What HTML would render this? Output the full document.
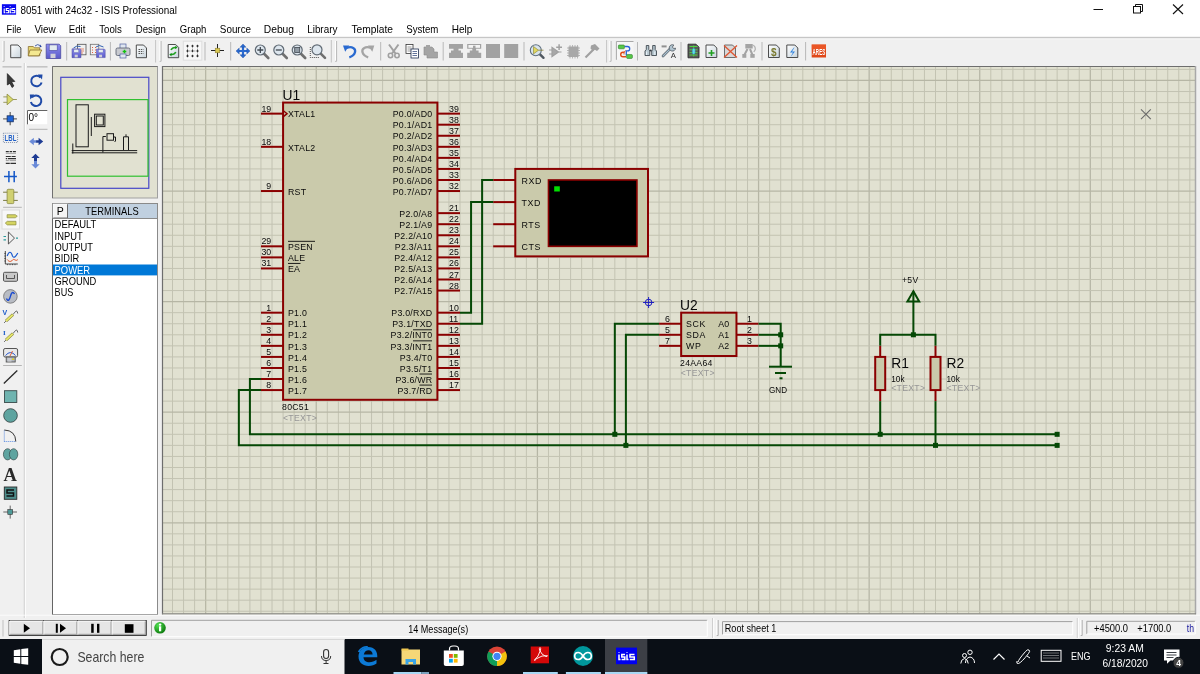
<!DOCTYPE html><html><head><meta charset="utf-8"><style>
html,body{margin:0;padding:0;width:1200px;height:674px;overflow:hidden;background:#f0f0f0;}
svg{position:absolute;left:0;top:0;will-change:transform;}
text{font-family:"Liberation Sans",sans-serif;}
</style></head><body>
<svg width="1200" height="674" viewBox="0 0 1200 674">
<rect x="0" y="0" width="1200" height="38" fill="#ffffff" stroke="none" stroke-width="1" />
<rect x="0" y="36.8" width="1200" height="1.8" fill="#c6c6c6" stroke="none" stroke-width="1" />
<rect x="0" y="38.5" width="1200" height="600.5" fill="#f0f0f0" stroke="none" stroke-width="1" />
<g>
<rect x="1.9" y="4.2" width="14.2" height="10.5" fill="#0808f0" stroke="none" stroke-width="1" />
<path d="M4.2 8.5v4.3h1.2 M8.8 8.5h-2.5v2h2.3v2.2h-2.5 M10.2 8.5v4.3h1.2 M15 8.5h-3v2h2.8v2.2h-3" stroke="#fff" stroke-width="1.1" fill="none"/><path d="M4.2 6.2v0.8M10.2 6.2v0.8" stroke="#fff" stroke-width="1"/>
</g>
<text x="20.4" y="13.9" font-size="11.2" fill="#000" text-anchor="start" textLength="156.5" lengthAdjust="spacingAndGlyphs" >8051 with 24c32 - ISIS Professional</text>
<line x1="1093.5" y1="9.5" x2="1103" y2="9.5" stroke="#111" stroke-width="1" />
<rect x="1133.5" y="6.5" width="7" height="6.5" fill="none" stroke="#111" stroke-width="1" />
<path d="M1135.5 6.5v-2h7v7h-2" fill="none" stroke="#111" stroke-width="1"/>
<line x1="1173" y1="4.5" x2="1183" y2="14" stroke="#111" stroke-width="1.1" />
<line x1="1183" y1="4.5" x2="1173" y2="14" stroke="#111" stroke-width="1.1" />
<text x="6.6" y="32.5" font-size="11.2" fill="#000" text-anchor="start" textLength="14.8" lengthAdjust="spacingAndGlyphs" >File</text>
<text x="34.4" y="32.5" font-size="11.2" fill="#000" text-anchor="start" textLength="21.4" lengthAdjust="spacingAndGlyphs" >View</text>
<text x="68.8" y="32.5" font-size="11.2" fill="#000" text-anchor="start" textLength="16.6" lengthAdjust="spacingAndGlyphs" >Edit</text>
<text x="99.2" y="32.5" font-size="11.2" fill="#000" text-anchor="start" textLength="22.6" lengthAdjust="spacingAndGlyphs" >Tools</text>
<text x="135.8" y="32.5" font-size="11.2" fill="#000" text-anchor="start" textLength="30.0" lengthAdjust="spacingAndGlyphs" >Design</text>
<text x="179.8" y="32.5" font-size="11.2" fill="#000" text-anchor="start" textLength="26.6" lengthAdjust="spacingAndGlyphs" >Graph</text>
<text x="219.8" y="32.5" font-size="11.2" fill="#000" text-anchor="start" textLength="31.3" lengthAdjust="spacingAndGlyphs" >Source</text>
<text x="263.8" y="32.5" font-size="11.2" fill="#000" text-anchor="start" textLength="30.2" lengthAdjust="spacingAndGlyphs" >Debug</text>
<text x="307.2" y="32.5" font-size="11.2" fill="#000" text-anchor="start" textLength="30.2" lengthAdjust="spacingAndGlyphs" >Library</text>
<text x="351.5" y="32.5" font-size="11.2" fill="#000" text-anchor="start" textLength="41.5" lengthAdjust="spacingAndGlyphs" >Template</text>
<text x="406.2" y="32.5" font-size="11.2" fill="#000" text-anchor="start" textLength="32.2" lengthAdjust="spacingAndGlyphs" >System</text>
<text x="451.7" y="32.5" font-size="11.2" fill="#000" text-anchor="start" textLength="20.7" lengthAdjust="spacingAndGlyphs" >Help</text>
<rect x="162" y="66" width="1034" height="548.5" fill="#e1e1d1" stroke="none" stroke-width="1" />
<g>
<line x1="172.5" y1="67" x2="172.5" y2="613.5" stroke="#c3c3b2" stroke-width="1" />
<line x1="183.56" y1="67" x2="183.56" y2="613.5" stroke="#c3c3b2" stroke-width="1" />
<line x1="194.62" y1="67" x2="194.62" y2="613.5" stroke="#c3c3b2" stroke-width="1" />
<line x1="205.67" y1="67" x2="205.67" y2="613.5" stroke="#b6b6a5" stroke-width="1.25" />
<line x1="216.73" y1="67" x2="216.73" y2="613.5" stroke="#c3c3b2" stroke-width="1" />
<line x1="227.79" y1="67" x2="227.79" y2="613.5" stroke="#c3c3b2" stroke-width="1" />
<line x1="238.85" y1="67" x2="238.85" y2="613.5" stroke="#c3c3b2" stroke-width="1" />
<line x1="249.91" y1="67" x2="249.91" y2="613.5" stroke="#c3c3b2" stroke-width="1" />
<line x1="260.96" y1="67" x2="260.96" y2="613.5" stroke="#c3c3b2" stroke-width="1" />
<line x1="272.02" y1="67" x2="272.02" y2="613.5" stroke="#c3c3b2" stroke-width="1" />
<line x1="283.08" y1="67" x2="283.08" y2="613.5" stroke="#c3c3b2" stroke-width="1" />
<line x1="294.14" y1="67" x2="294.14" y2="613.5" stroke="#c3c3b2" stroke-width="1" />
<line x1="305.2" y1="67" x2="305.2" y2="613.5" stroke="#c3c3b2" stroke-width="1" />
<line x1="316.25" y1="67" x2="316.25" y2="613.5" stroke="#b6b6a5" stroke-width="1.25" />
<line x1="327.31" y1="67" x2="327.31" y2="613.5" stroke="#c3c3b2" stroke-width="1" />
<line x1="338.37" y1="67" x2="338.37" y2="613.5" stroke="#c3c3b2" stroke-width="1" />
<line x1="349.43" y1="67" x2="349.43" y2="613.5" stroke="#c3c3b2" stroke-width="1" />
<line x1="360.49" y1="67" x2="360.49" y2="613.5" stroke="#c3c3b2" stroke-width="1" />
<line x1="371.54" y1="67" x2="371.54" y2="613.5" stroke="#c3c3b2" stroke-width="1" />
<line x1="382.6" y1="67" x2="382.6" y2="613.5" stroke="#c3c3b2" stroke-width="1" />
<line x1="393.66" y1="67" x2="393.66" y2="613.5" stroke="#c3c3b2" stroke-width="1" />
<line x1="404.72" y1="67" x2="404.72" y2="613.5" stroke="#c3c3b2" stroke-width="1" />
<line x1="415.78" y1="67" x2="415.78" y2="613.5" stroke="#c3c3b2" stroke-width="1" />
<line x1="426.83" y1="67" x2="426.83" y2="613.5" stroke="#b6b6a5" stroke-width="1.25" />
<line x1="437.89" y1="67" x2="437.89" y2="613.5" stroke="#c3c3b2" stroke-width="1" />
<line x1="448.95" y1="67" x2="448.95" y2="613.5" stroke="#c3c3b2" stroke-width="1" />
<line x1="460.01" y1="67" x2="460.01" y2="613.5" stroke="#c3c3b2" stroke-width="1" />
<line x1="471.07" y1="67" x2="471.07" y2="613.5" stroke="#c3c3b2" stroke-width="1" />
<line x1="482.12" y1="67" x2="482.12" y2="613.5" stroke="#c3c3b2" stroke-width="1" />
<line x1="493.18" y1="67" x2="493.18" y2="613.5" stroke="#c3c3b2" stroke-width="1" />
<line x1="504.24" y1="67" x2="504.24" y2="613.5" stroke="#c3c3b2" stroke-width="1" />
<line x1="515.3" y1="67" x2="515.3" y2="613.5" stroke="#c3c3b2" stroke-width="1" />
<line x1="526.36" y1="67" x2="526.36" y2="613.5" stroke="#c3c3b2" stroke-width="1" />
<line x1="537.41" y1="67" x2="537.41" y2="613.5" stroke="#b6b6a5" stroke-width="1.25" />
<line x1="548.47" y1="67" x2="548.47" y2="613.5" stroke="#c3c3b2" stroke-width="1" />
<line x1="559.53" y1="67" x2="559.53" y2="613.5" stroke="#c3c3b2" stroke-width="1" />
<line x1="570.59" y1="67" x2="570.59" y2="613.5" stroke="#c3c3b2" stroke-width="1" />
<line x1="581.65" y1="67" x2="581.65" y2="613.5" stroke="#c3c3b2" stroke-width="1" />
<line x1="592.7" y1="67" x2="592.7" y2="613.5" stroke="#c3c3b2" stroke-width="1" />
<line x1="603.76" y1="67" x2="603.76" y2="613.5" stroke="#c3c3b2" stroke-width="1" />
<line x1="614.82" y1="67" x2="614.82" y2="613.5" stroke="#c3c3b2" stroke-width="1" />
<line x1="625.88" y1="67" x2="625.88" y2="613.5" stroke="#c3c3b2" stroke-width="1" />
<line x1="636.94" y1="67" x2="636.94" y2="613.5" stroke="#c3c3b2" stroke-width="1" />
<line x1="647.99" y1="67" x2="647.99" y2="613.5" stroke="#b6b6a5" stroke-width="1.25" />
<line x1="659.05" y1="67" x2="659.05" y2="613.5" stroke="#c3c3b2" stroke-width="1" />
<line x1="670.11" y1="67" x2="670.11" y2="613.5" stroke="#c3c3b2" stroke-width="1" />
<line x1="681.17" y1="67" x2="681.17" y2="613.5" stroke="#c3c3b2" stroke-width="1" />
<line x1="692.23" y1="67" x2="692.23" y2="613.5" stroke="#c3c3b2" stroke-width="1" />
<line x1="703.28" y1="67" x2="703.28" y2="613.5" stroke="#c3c3b2" stroke-width="1" />
<line x1="714.34" y1="67" x2="714.34" y2="613.5" stroke="#c3c3b2" stroke-width="1" />
<line x1="725.4" y1="67" x2="725.4" y2="613.5" stroke="#c3c3b2" stroke-width="1" />
<line x1="736.46" y1="67" x2="736.46" y2="613.5" stroke="#c3c3b2" stroke-width="1" />
<line x1="747.52" y1="67" x2="747.52" y2="613.5" stroke="#c3c3b2" stroke-width="1" />
<line x1="758.57" y1="67" x2="758.57" y2="613.5" stroke="#b6b6a5" stroke-width="1.25" />
<line x1="769.63" y1="67" x2="769.63" y2="613.5" stroke="#c3c3b2" stroke-width="1" />
<line x1="780.69" y1="67" x2="780.69" y2="613.5" stroke="#c3c3b2" stroke-width="1" />
<line x1="791.75" y1="67" x2="791.75" y2="613.5" stroke="#c3c3b2" stroke-width="1" />
<line x1="802.81" y1="67" x2="802.81" y2="613.5" stroke="#c3c3b2" stroke-width="1" />
<line x1="813.86" y1="67" x2="813.86" y2="613.5" stroke="#c3c3b2" stroke-width="1" />
<line x1="824.92" y1="67" x2="824.92" y2="613.5" stroke="#c3c3b2" stroke-width="1" />
<line x1="835.98" y1="67" x2="835.98" y2="613.5" stroke="#c3c3b2" stroke-width="1" />
<line x1="847.04" y1="67" x2="847.04" y2="613.5" stroke="#c3c3b2" stroke-width="1" />
<line x1="858.1" y1="67" x2="858.1" y2="613.5" stroke="#c3c3b2" stroke-width="1" />
<line x1="869.15" y1="67" x2="869.15" y2="613.5" stroke="#b6b6a5" stroke-width="1.25" />
<line x1="880.21" y1="67" x2="880.21" y2="613.5" stroke="#c3c3b2" stroke-width="1" />
<line x1="891.27" y1="67" x2="891.27" y2="613.5" stroke="#c3c3b2" stroke-width="1" />
<line x1="902.33" y1="67" x2="902.33" y2="613.5" stroke="#c3c3b2" stroke-width="1" />
<line x1="913.39" y1="67" x2="913.39" y2="613.5" stroke="#c3c3b2" stroke-width="1" />
<line x1="924.44" y1="67" x2="924.44" y2="613.5" stroke="#c3c3b2" stroke-width="1" />
<line x1="935.5" y1="67" x2="935.5" y2="613.5" stroke="#c3c3b2" stroke-width="1" />
<line x1="946.56" y1="67" x2="946.56" y2="613.5" stroke="#c3c3b2" stroke-width="1" />
<line x1="957.62" y1="67" x2="957.62" y2="613.5" stroke="#c3c3b2" stroke-width="1" />
<line x1="968.68" y1="67" x2="968.68" y2="613.5" stroke="#c3c3b2" stroke-width="1" />
<line x1="979.73" y1="67" x2="979.73" y2="613.5" stroke="#b6b6a5" stroke-width="1.25" />
<line x1="990.79" y1="67" x2="990.79" y2="613.5" stroke="#c3c3b2" stroke-width="1" />
<line x1="1001.85" y1="67" x2="1001.85" y2="613.5" stroke="#c3c3b2" stroke-width="1" />
<line x1="1012.91" y1="67" x2="1012.91" y2="613.5" stroke="#c3c3b2" stroke-width="1" />
<line x1="1023.97" y1="67" x2="1023.97" y2="613.5" stroke="#c3c3b2" stroke-width="1" />
<line x1="1035.02" y1="67" x2="1035.02" y2="613.5" stroke="#c3c3b2" stroke-width="1" />
<line x1="1046.08" y1="67" x2="1046.08" y2="613.5" stroke="#c3c3b2" stroke-width="1" />
<line x1="1057.14" y1="67" x2="1057.14" y2="613.5" stroke="#c3c3b2" stroke-width="1" />
<line x1="1068.2" y1="67" x2="1068.2" y2="613.5" stroke="#c3c3b2" stroke-width="1" />
<line x1="1079.26" y1="67" x2="1079.26" y2="613.5" stroke="#c3c3b2" stroke-width="1" />
<line x1="1090.31" y1="67" x2="1090.31" y2="613.5" stroke="#b6b6a5" stroke-width="1.25" />
<line x1="1101.37" y1="67" x2="1101.37" y2="613.5" stroke="#c3c3b2" stroke-width="1" />
<line x1="1112.43" y1="67" x2="1112.43" y2="613.5" stroke="#c3c3b2" stroke-width="1" />
<line x1="1123.49" y1="67" x2="1123.49" y2="613.5" stroke="#c3c3b2" stroke-width="1" />
<line x1="1134.55" y1="67" x2="1134.55" y2="613.5" stroke="#c3c3b2" stroke-width="1" />
<line x1="1145.6" y1="67" x2="1145.6" y2="613.5" stroke="#c3c3b2" stroke-width="1" />
<line x1="1156.66" y1="67" x2="1156.66" y2="613.5" stroke="#c3c3b2" stroke-width="1" />
<line x1="1167.72" y1="67" x2="1167.72" y2="613.5" stroke="#c3c3b2" stroke-width="1" />
<line x1="1178.78" y1="67" x2="1178.78" y2="613.5" stroke="#c3c3b2" stroke-width="1" />
<line x1="1189.84" y1="67" x2="1189.84" y2="613.5" stroke="#c3c3b2" stroke-width="1" />
<line x1="163" y1="69.4" x2="1195" y2="69.4" stroke="#c3c3b2" stroke-width="1" />
<line x1="163" y1="80.46" x2="1195" y2="80.46" stroke="#b6b6a5" stroke-width="1.25" />
<line x1="163" y1="91.52" x2="1195" y2="91.52" stroke="#c3c3b2" stroke-width="1" />
<line x1="163" y1="102.57" x2="1195" y2="102.57" stroke="#c3c3b2" stroke-width="1" />
<line x1="163" y1="113.63" x2="1195" y2="113.63" stroke="#c3c3b2" stroke-width="1" />
<line x1="163" y1="124.69" x2="1195" y2="124.69" stroke="#c3c3b2" stroke-width="1" />
<line x1="163" y1="135.75" x2="1195" y2="135.75" stroke="#c3c3b2" stroke-width="1" />
<line x1="163" y1="146.81" x2="1195" y2="146.81" stroke="#c3c3b2" stroke-width="1" />
<line x1="163" y1="157.86" x2="1195" y2="157.86" stroke="#c3c3b2" stroke-width="1" />
<line x1="163" y1="168.92" x2="1195" y2="168.92" stroke="#c3c3b2" stroke-width="1" />
<line x1="163" y1="179.98" x2="1195" y2="179.98" stroke="#c3c3b2" stroke-width="1" />
<line x1="163" y1="191.04" x2="1195" y2="191.04" stroke="#b6b6a5" stroke-width="1.25" />
<line x1="163" y1="202.1" x2="1195" y2="202.1" stroke="#c3c3b2" stroke-width="1" />
<line x1="163" y1="213.15" x2="1195" y2="213.15" stroke="#c3c3b2" stroke-width="1" />
<line x1="163" y1="224.21" x2="1195" y2="224.21" stroke="#c3c3b2" stroke-width="1" />
<line x1="163" y1="235.27" x2="1195" y2="235.27" stroke="#c3c3b2" stroke-width="1" />
<line x1="163" y1="246.33" x2="1195" y2="246.33" stroke="#c3c3b2" stroke-width="1" />
<line x1="163" y1="257.39" x2="1195" y2="257.39" stroke="#c3c3b2" stroke-width="1" />
<line x1="163" y1="268.44" x2="1195" y2="268.44" stroke="#c3c3b2" stroke-width="1" />
<line x1="163" y1="279.5" x2="1195" y2="279.5" stroke="#c3c3b2" stroke-width="1" />
<line x1="163" y1="290.56" x2="1195" y2="290.56" stroke="#c3c3b2" stroke-width="1" />
<line x1="163" y1="301.62" x2="1195" y2="301.62" stroke="#b6b6a5" stroke-width="1.25" />
<line x1="163" y1="312.68" x2="1195" y2="312.68" stroke="#c3c3b2" stroke-width="1" />
<line x1="163" y1="323.73" x2="1195" y2="323.73" stroke="#c3c3b2" stroke-width="1" />
<line x1="163" y1="334.79" x2="1195" y2="334.79" stroke="#c3c3b2" stroke-width="1" />
<line x1="163" y1="345.85" x2="1195" y2="345.85" stroke="#c3c3b2" stroke-width="1" />
<line x1="163" y1="356.91" x2="1195" y2="356.91" stroke="#c3c3b2" stroke-width="1" />
<line x1="163" y1="367.97" x2="1195" y2="367.97" stroke="#c3c3b2" stroke-width="1" />
<line x1="163" y1="379.02" x2="1195" y2="379.02" stroke="#c3c3b2" stroke-width="1" />
<line x1="163" y1="390.08" x2="1195" y2="390.08" stroke="#c3c3b2" stroke-width="1" />
<line x1="163" y1="401.14" x2="1195" y2="401.14" stroke="#c3c3b2" stroke-width="1" />
<line x1="163" y1="412.2" x2="1195" y2="412.2" stroke="#b6b6a5" stroke-width="1.25" />
<line x1="163" y1="423.26" x2="1195" y2="423.26" stroke="#c3c3b2" stroke-width="1" />
<line x1="163" y1="434.31" x2="1195" y2="434.31" stroke="#c3c3b2" stroke-width="1" />
<line x1="163" y1="445.37" x2="1195" y2="445.37" stroke="#c3c3b2" stroke-width="1" />
<line x1="163" y1="456.43" x2="1195" y2="456.43" stroke="#c3c3b2" stroke-width="1" />
<line x1="163" y1="467.49" x2="1195" y2="467.49" stroke="#c3c3b2" stroke-width="1" />
<line x1="163" y1="478.55" x2="1195" y2="478.55" stroke="#c3c3b2" stroke-width="1" />
<line x1="163" y1="489.6" x2="1195" y2="489.6" stroke="#c3c3b2" stroke-width="1" />
<line x1="163" y1="500.66" x2="1195" y2="500.66" stroke="#c3c3b2" stroke-width="1" />
<line x1="163" y1="511.72" x2="1195" y2="511.72" stroke="#c3c3b2" stroke-width="1" />
<line x1="163" y1="522.78" x2="1195" y2="522.78" stroke="#b6b6a5" stroke-width="1.25" />
<line x1="163" y1="533.84" x2="1195" y2="533.84" stroke="#c3c3b2" stroke-width="1" />
<line x1="163" y1="544.89" x2="1195" y2="544.89" stroke="#c3c3b2" stroke-width="1" />
<line x1="163" y1="555.95" x2="1195" y2="555.95" stroke="#c3c3b2" stroke-width="1" />
<line x1="163" y1="567.01" x2="1195" y2="567.01" stroke="#c3c3b2" stroke-width="1" />
<line x1="163" y1="578.07" x2="1195" y2="578.07" stroke="#c3c3b2" stroke-width="1" />
<line x1="163" y1="589.13" x2="1195" y2="589.13" stroke="#c3c3b2" stroke-width="1" />
<line x1="163" y1="600.18" x2="1195" y2="600.18" stroke="#c3c3b2" stroke-width="1" />
<line x1="163" y1="611.24" x2="1195" y2="611.24" stroke="#c3c3b2" stroke-width="1" />
</g>
<line x1="162" y1="66.5" x2="1196" y2="66.5" stroke="#6e6e6e" stroke-width="1.2" />
<line x1="162.5" y1="66" x2="162.5" y2="614.5" stroke="#6e6e6e" stroke-width="1.2" />
<line x1="1195.5" y1="66" x2="1195.5" y2="614.5" stroke="#a8a8a8" stroke-width="1.5" />
<line x1="162" y1="613.9" x2="1196" y2="613.9" stroke="#858580" stroke-width="1.3" />
<g font-family="Liberation Sans, sans-serif">
<rect x="283.08" y="102.57" width="154.32" height="297.23" fill="#cacaab" stroke="#8a0000" stroke-width="2" />
<text x="282.6" y="99.7" font-size="13.8" fill="#0a0a0a" text-anchor="start" >U1</text>
<line x1="260.96" y1="113.63" x2="283.08" y2="113.63" stroke="#8a0000" stroke-width="2" />
<text x="288" y="117.33" font-size="8.8" fill="#0a0a0a" text-anchor="start" letter-spacing="0.25" >XTAL1</text>
<text x="271.2" y="111.63" font-size="8.8" fill="#0a0a0a" text-anchor="end" >19</text>
<line x1="260.96" y1="146.81" x2="283.08" y2="146.81" stroke="#8a0000" stroke-width="2" />
<text x="288" y="150.51" font-size="8.8" fill="#0a0a0a" text-anchor="start" letter-spacing="0.25" >XTAL2</text>
<text x="271.2" y="144.81" font-size="8.8" fill="#0a0a0a" text-anchor="end" >18</text>
<line x1="260.96" y1="191.04" x2="283.08" y2="191.04" stroke="#8a0000" stroke-width="2" />
<text x="288" y="194.74" font-size="8.8" fill="#0a0a0a" text-anchor="start" letter-spacing="0.25" >RST</text>
<text x="271.2" y="189.04" font-size="8.8" fill="#0a0a0a" text-anchor="end" >9</text>
<line x1="260.96" y1="246.33" x2="283.08" y2="246.33" stroke="#8a0000" stroke-width="2" />
<text x="288" y="250.03" font-size="8.8" fill="#0a0a0a" text-anchor="start" letter-spacing="0.25" >PSEN</text>
<text x="271.2" y="244.33" font-size="8.8" fill="#0a0a0a" text-anchor="end" >29</text>
<line x1="260.96" y1="257.39" x2="283.08" y2="257.39" stroke="#8a0000" stroke-width="2" />
<text x="288" y="261.09" font-size="8.8" fill="#0a0a0a" text-anchor="start" letter-spacing="0.25" >ALE</text>
<text x="271.2" y="255.39" font-size="8.8" fill="#0a0a0a" text-anchor="end" >30</text>
<line x1="260.96" y1="268.44" x2="283.08" y2="268.44" stroke="#8a0000" stroke-width="2" />
<text x="288" y="272.14" font-size="8.8" fill="#0a0a0a" text-anchor="start" letter-spacing="0.25" >EA</text>
<text x="271.2" y="266.44" font-size="8.8" fill="#0a0a0a" text-anchor="end" >31</text>
<line x1="260.96" y1="312.68" x2="283.08" y2="312.68" stroke="#8a0000" stroke-width="2" />
<text x="288" y="316.38" font-size="8.8" fill="#0a0a0a" text-anchor="start" letter-spacing="0.25" >P1.0</text>
<text x="271.2" y="310.68" font-size="8.8" fill="#0a0a0a" text-anchor="end" >1</text>
<line x1="260.96" y1="323.73" x2="283.08" y2="323.73" stroke="#8a0000" stroke-width="2" />
<text x="288" y="327.43" font-size="8.8" fill="#0a0a0a" text-anchor="start" letter-spacing="0.25" >P1.1</text>
<text x="271.2" y="321.73" font-size="8.8" fill="#0a0a0a" text-anchor="end" >2</text>
<line x1="260.96" y1="334.79" x2="283.08" y2="334.79" stroke="#8a0000" stroke-width="2" />
<text x="288" y="338.49" font-size="8.8" fill="#0a0a0a" text-anchor="start" letter-spacing="0.25" >P1.2</text>
<text x="271.2" y="332.79" font-size="8.8" fill="#0a0a0a" text-anchor="end" >3</text>
<line x1="260.96" y1="345.85" x2="283.08" y2="345.85" stroke="#8a0000" stroke-width="2" />
<text x="288" y="349.55" font-size="8.8" fill="#0a0a0a" text-anchor="start" letter-spacing="0.25" >P1.3</text>
<text x="271.2" y="343.85" font-size="8.8" fill="#0a0a0a" text-anchor="end" >4</text>
<line x1="260.96" y1="356.91" x2="283.08" y2="356.91" stroke="#8a0000" stroke-width="2" />
<text x="288" y="360.61" font-size="8.8" fill="#0a0a0a" text-anchor="start" letter-spacing="0.25" >P1.4</text>
<text x="271.2" y="354.91" font-size="8.8" fill="#0a0a0a" text-anchor="end" >5</text>
<line x1="260.96" y1="367.97" x2="283.08" y2="367.97" stroke="#8a0000" stroke-width="2" />
<text x="288" y="371.67" font-size="8.8" fill="#0a0a0a" text-anchor="start" letter-spacing="0.25" >P1.5</text>
<text x="271.2" y="365.97" font-size="8.8" fill="#0a0a0a" text-anchor="end" >6</text>
<line x1="260.96" y1="379.02" x2="283.08" y2="379.02" stroke="#8a0000" stroke-width="2" />
<text x="288" y="382.72" font-size="8.8" fill="#0a0a0a" text-anchor="start" letter-spacing="0.25" >P1.6</text>
<text x="271.2" y="377.02" font-size="8.8" fill="#0a0a0a" text-anchor="end" >7</text>
<line x1="260.96" y1="390.08" x2="283.08" y2="390.08" stroke="#8a0000" stroke-width="2" />
<text x="288" y="393.78" font-size="8.8" fill="#0a0a0a" text-anchor="start" letter-spacing="0.25" >P1.7</text>
<text x="271.2" y="388.08" font-size="8.8" fill="#0a0a0a" text-anchor="end" >8</text>
<line x1="288" y1="241.33" x2="315" y2="241.33" stroke="#0a0a0a" stroke-width="0.9" />
<line x1="288" y1="263.44" x2="300.5" y2="263.44" stroke="#0a0a0a" stroke-width="0.9" />
<polyline fill="none" stroke="#8a0000" stroke-width="1.4" stroke-linejoin="miter" points="283.08,110.43 287.08,113.63 283.08,116.83"/>
<line x1="437.4" y1="113.63" x2="460.01" y2="113.63" stroke="#8a0000" stroke-width="2" />
<text x="432.4" y="117.33" font-size="8.8" fill="#0a0a0a" text-anchor="end" letter-spacing="0.25" >P0.0/AD0</text>
<text x="449" y="111.63" font-size="8.8" fill="#0a0a0a" text-anchor="start" >39</text>
<line x1="437.4" y1="124.69" x2="460.01" y2="124.69" stroke="#8a0000" stroke-width="2" />
<text x="432.4" y="128.39" font-size="8.8" fill="#0a0a0a" text-anchor="end" letter-spacing="0.25" >P0.1/AD1</text>
<text x="449" y="122.69" font-size="8.8" fill="#0a0a0a" text-anchor="start" >38</text>
<line x1="437.4" y1="135.75" x2="460.01" y2="135.75" stroke="#8a0000" stroke-width="2" />
<text x="432.4" y="139.45" font-size="8.8" fill="#0a0a0a" text-anchor="end" letter-spacing="0.25" >P0.2/AD2</text>
<text x="449" y="133.75" font-size="8.8" fill="#0a0a0a" text-anchor="start" >37</text>
<line x1="437.4" y1="146.81" x2="460.01" y2="146.81" stroke="#8a0000" stroke-width="2" />
<text x="432.4" y="150.51" font-size="8.8" fill="#0a0a0a" text-anchor="end" letter-spacing="0.25" >P0.3/AD3</text>
<text x="449" y="144.81" font-size="8.8" fill="#0a0a0a" text-anchor="start" >36</text>
<line x1="437.4" y1="157.86" x2="460.01" y2="157.86" stroke="#8a0000" stroke-width="2" />
<text x="432.4" y="161.56" font-size="8.8" fill="#0a0a0a" text-anchor="end" letter-spacing="0.25" >P0.4/AD4</text>
<text x="449" y="155.86" font-size="8.8" fill="#0a0a0a" text-anchor="start" >35</text>
<line x1="437.4" y1="168.92" x2="460.01" y2="168.92" stroke="#8a0000" stroke-width="2" />
<text x="432.4" y="172.62" font-size="8.8" fill="#0a0a0a" text-anchor="end" letter-spacing="0.25" >P0.5/AD5</text>
<text x="449" y="166.92" font-size="8.8" fill="#0a0a0a" text-anchor="start" >34</text>
<line x1="437.4" y1="179.98" x2="460.01" y2="179.98" stroke="#8a0000" stroke-width="2" />
<text x="432.4" y="183.68" font-size="8.8" fill="#0a0a0a" text-anchor="end" letter-spacing="0.25" >P0.6/AD6</text>
<text x="449" y="177.98" font-size="8.8" fill="#0a0a0a" text-anchor="start" >33</text>
<line x1="437.4" y1="191.04" x2="460.01" y2="191.04" stroke="#8a0000" stroke-width="2" />
<text x="432.4" y="194.74" font-size="8.8" fill="#0a0a0a" text-anchor="end" letter-spacing="0.25" >P0.7/AD7</text>
<text x="449" y="189.04" font-size="8.8" fill="#0a0a0a" text-anchor="start" >32</text>
<line x1="437.4" y1="213.15" x2="460.01" y2="213.15" stroke="#8a0000" stroke-width="2" />
<text x="432.4" y="216.85" font-size="8.8" fill="#0a0a0a" text-anchor="end" letter-spacing="0.25" >P2.0/A8</text>
<text x="449" y="211.15" font-size="8.8" fill="#0a0a0a" text-anchor="start" >21</text>
<line x1="437.4" y1="224.21" x2="460.01" y2="224.21" stroke="#8a0000" stroke-width="2" />
<text x="432.4" y="227.91" font-size="8.8" fill="#0a0a0a" text-anchor="end" letter-spacing="0.25" >P2.1/A9</text>
<text x="449" y="222.21" font-size="8.8" fill="#0a0a0a" text-anchor="start" >22</text>
<line x1="437.4" y1="235.27" x2="460.01" y2="235.27" stroke="#8a0000" stroke-width="2" />
<text x="432.4" y="238.97" font-size="8.8" fill="#0a0a0a" text-anchor="end" letter-spacing="0.25" >P2.2/A10</text>
<text x="449" y="233.27" font-size="8.8" fill="#0a0a0a" text-anchor="start" >23</text>
<line x1="437.4" y1="246.33" x2="460.01" y2="246.33" stroke="#8a0000" stroke-width="2" />
<text x="432.4" y="250.03" font-size="8.8" fill="#0a0a0a" text-anchor="end" letter-spacing="0.25" >P2.3/A11</text>
<text x="449" y="244.33" font-size="8.8" fill="#0a0a0a" text-anchor="start" >24</text>
<line x1="437.4" y1="257.39" x2="460.01" y2="257.39" stroke="#8a0000" stroke-width="2" />
<text x="432.4" y="261.09" font-size="8.8" fill="#0a0a0a" text-anchor="end" letter-spacing="0.25" >P2.4/A12</text>
<text x="449" y="255.39" font-size="8.8" fill="#0a0a0a" text-anchor="start" >25</text>
<line x1="437.4" y1="268.44" x2="460.01" y2="268.44" stroke="#8a0000" stroke-width="2" />
<text x="432.4" y="272.14" font-size="8.8" fill="#0a0a0a" text-anchor="end" letter-spacing="0.25" >P2.5/A13</text>
<text x="449" y="266.44" font-size="8.8" fill="#0a0a0a" text-anchor="start" >26</text>
<line x1="437.4" y1="279.5" x2="460.01" y2="279.5" stroke="#8a0000" stroke-width="2" />
<text x="432.4" y="283.2" font-size="8.8" fill="#0a0a0a" text-anchor="end" letter-spacing="0.25" >P2.6/A14</text>
<text x="449" y="277.5" font-size="8.8" fill="#0a0a0a" text-anchor="start" >27</text>
<line x1="437.4" y1="290.56" x2="460.01" y2="290.56" stroke="#8a0000" stroke-width="2" />
<text x="432.4" y="294.26" font-size="8.8" fill="#0a0a0a" text-anchor="end" letter-spacing="0.25" >P2.7/A15</text>
<text x="449" y="288.56" font-size="8.8" fill="#0a0a0a" text-anchor="start" >28</text>
<line x1="437.4" y1="312.68" x2="460.01" y2="312.68" stroke="#8a0000" stroke-width="2" />
<text x="432.4" y="316.38" font-size="8.8" fill="#0a0a0a" text-anchor="end" letter-spacing="0.25" >P3.0/RXD</text>
<text x="449" y="310.68" font-size="8.8" fill="#0a0a0a" text-anchor="start" >10</text>
<line x1="437.4" y1="323.73" x2="460.01" y2="323.73" stroke="#8a0000" stroke-width="2" />
<text x="432.4" y="327.43" font-size="8.8" fill="#0a0a0a" text-anchor="end" letter-spacing="0.25" >P3.1/TXD</text>
<text x="449" y="321.73" font-size="8.8" fill="#0a0a0a" text-anchor="start" >11</text>
<line x1="437.4" y1="334.79" x2="460.01" y2="334.79" stroke="#8a0000" stroke-width="2" />
<text x="432.4" y="338.49" font-size="8.8" fill="#0a0a0a" text-anchor="end" letter-spacing="0.25" >P3.2/INT0</text>
<text x="449" y="332.79" font-size="8.8" fill="#0a0a0a" text-anchor="start" >12</text>
<line x1="437.4" y1="345.85" x2="460.01" y2="345.85" stroke="#8a0000" stroke-width="2" />
<text x="432.4" y="349.55" font-size="8.8" fill="#0a0a0a" text-anchor="end" letter-spacing="0.25" >P3.3/INT1</text>
<text x="449" y="343.85" font-size="8.8" fill="#0a0a0a" text-anchor="start" >13</text>
<line x1="437.4" y1="356.91" x2="460.01" y2="356.91" stroke="#8a0000" stroke-width="2" />
<text x="432.4" y="360.61" font-size="8.8" fill="#0a0a0a" text-anchor="end" letter-spacing="0.25" >P3.4/T0</text>
<text x="449" y="354.91" font-size="8.8" fill="#0a0a0a" text-anchor="start" >14</text>
<line x1="437.4" y1="367.97" x2="460.01" y2="367.97" stroke="#8a0000" stroke-width="2" />
<text x="432.4" y="371.67" font-size="8.8" fill="#0a0a0a" text-anchor="end" letter-spacing="0.25" >P3.5/T1</text>
<text x="449" y="365.97" font-size="8.8" fill="#0a0a0a" text-anchor="start" >15</text>
<line x1="437.4" y1="379.02" x2="460.01" y2="379.02" stroke="#8a0000" stroke-width="2" />
<text x="432.4" y="382.72" font-size="8.8" fill="#0a0a0a" text-anchor="end" letter-spacing="0.25" >P3.6/WR</text>
<text x="449" y="377.02" font-size="8.8" fill="#0a0a0a" text-anchor="start" >16</text>
<line x1="437.4" y1="390.08" x2="460.01" y2="390.08" stroke="#8a0000" stroke-width="2" />
<text x="432.4" y="393.78" font-size="8.8" fill="#0a0a0a" text-anchor="end" letter-spacing="0.25" >P3.7/RD</text>
<text x="449" y="388.08" font-size="8.8" fill="#0a0a0a" text-anchor="start" >17</text>
<line x1="413" y1="329.79" x2="432" y2="329.79" stroke="#0a0a0a" stroke-width="0.9" />
<line x1="413" y1="340.85" x2="432" y2="340.85" stroke="#0a0a0a" stroke-width="0.9" />
<line x1="419.5" y1="374.02" x2="432" y2="374.02" stroke="#0a0a0a" stroke-width="0.9" />
<line x1="419.5" y1="385.08" x2="432" y2="385.08" stroke="#0a0a0a" stroke-width="0.9" />
<text x="282" y="409.7" font-size="8.7" fill="#0a0a0a" text-anchor="start" letter-spacing="0.3" >80C51</text>
<text x="283" y="420.7" font-size="8.7" fill="#969696" text-anchor="start" letter-spacing="0.3" >&lt;TEXT&gt;</text>
<rect x="515.3" y="168.92" width="132.7" height="87.46" fill="#cacaab" stroke="#8a0000" stroke-width="2" />
<rect x="548.47" y="179.98" width="88.46" height="66.35" fill="#000" stroke="#8a0000" stroke-width="1.6" />
<rect x="554.2" y="186.3" width="5.6" height="5.2" fill="#00e000" stroke="none" stroke-width="1" />
<line x1="493.18" y1="179.98" x2="515.3" y2="179.98" stroke="#8a0000" stroke-width="2" />
<text x="521.5" y="183.78" font-size="8.9" fill="#0a0a0a" text-anchor="start" letter-spacing="0.6" >RXD</text>
<line x1="493.18" y1="202.1" x2="515.3" y2="202.1" stroke="#8a0000" stroke-width="2" />
<text x="521.5" y="205.9" font-size="8.9" fill="#0a0a0a" text-anchor="start" letter-spacing="0.6" >TXD</text>
<line x1="493.18" y1="224.21" x2="515.3" y2="224.21" stroke="#8a0000" stroke-width="2" />
<text x="521.5" y="228.01" font-size="8.9" fill="#0a0a0a" text-anchor="start" letter-spacing="0.6" >RTS</text>
<line x1="493.18" y1="246.33" x2="515.3" y2="246.33" stroke="#8a0000" stroke-width="2" />
<text x="521.5" y="250.13" font-size="8.9" fill="#0a0a0a" text-anchor="start" letter-spacing="0.6" >CTS</text>
<rect x="681.17" y="312.68" width="55.29" height="43.32" fill="#cacaab" stroke="#8a0000" stroke-width="2" />
<text x="680" y="310" font-size="13.8" fill="#0a0a0a" text-anchor="start" >U2</text>
<line x1="659.05" y1="323.73" x2="681.17" y2="323.73" stroke="#8a0000" stroke-width="2" />
<line x1="736.46" y1="323.73" x2="758.57" y2="323.73" stroke="#8a0000" stroke-width="2" />
<text x="686" y="327.33" font-size="8.8" fill="#0a0a0a" text-anchor="start" letter-spacing="0.6" >SCK</text>
<text x="729.5" y="327.33" font-size="8.8" fill="#0a0a0a" text-anchor="end" letter-spacing="0.3" >A0</text>
<text x="669.8" y="321.73" font-size="8.8" fill="#0a0a0a" text-anchor="end" >6</text>
<text x="747" y="321.73" font-size="8.8" fill="#0a0a0a" text-anchor="start" >1</text>
<line x1="659.05" y1="334.79" x2="681.17" y2="334.79" stroke="#8a0000" stroke-width="2" />
<line x1="736.46" y1="334.79" x2="758.57" y2="334.79" stroke="#8a0000" stroke-width="2" />
<text x="686" y="338.39" font-size="8.8" fill="#0a0a0a" text-anchor="start" letter-spacing="0.6" >SDA</text>
<text x="729.5" y="338.39" font-size="8.8" fill="#0a0a0a" text-anchor="end" letter-spacing="0.3" >A1</text>
<text x="669.8" y="332.79" font-size="8.8" fill="#0a0a0a" text-anchor="end" >5</text>
<text x="747" y="332.79" font-size="8.8" fill="#0a0a0a" text-anchor="start" >2</text>
<line x1="659.05" y1="345.85" x2="681.17" y2="345.85" stroke="#8a0000" stroke-width="2" />
<line x1="736.46" y1="345.85" x2="758.57" y2="345.85" stroke="#8a0000" stroke-width="2" />
<text x="686" y="349.45" font-size="8.8" fill="#0a0a0a" text-anchor="start" letter-spacing="0.6" >WP</text>
<text x="729.5" y="349.45" font-size="8.8" fill="#0a0a0a" text-anchor="end" letter-spacing="0.3" >A2</text>
<text x="669.8" y="343.85" font-size="8.8" fill="#0a0a0a" text-anchor="end" >7</text>
<text x="747" y="343.85" font-size="8.8" fill="#0a0a0a" text-anchor="start" >3</text>
<text x="680" y="366" font-size="8.7" fill="#0a0a0a" text-anchor="start" letter-spacing="0.3" >24AA64</text>
<text x="680.7" y="376" font-size="8.7" fill="#969696" text-anchor="start" letter-spacing="0.3" >&lt;TEXT&gt;</text>
<polyline fill="none" stroke="#054805" stroke-width="2" stroke-linejoin="miter" points="758.57,323.73 780.69,323.73 780.69,366.7"/>
<line x1="758.57" y1="334.79" x2="780.69" y2="334.79" stroke="#054805" stroke-width="2" />
<line x1="758.57" y1="345.85" x2="780.69" y2="345.85" stroke="#054805" stroke-width="2" />
<rect x="778.19" y="332.29" width="5" height="5" fill="#054805" stroke="none" stroke-width="1" />
<rect x="778.19" y="343.35" width="5" height="5" fill="#054805" stroke="none" stroke-width="1" />
<line x1="769" y1="366.7" x2="792" y2="366.7" stroke="#054805" stroke-width="2" />
<line x1="775" y1="373" x2="786" y2="373" stroke="#054805" stroke-width="2" />
<line x1="779.5" y1="378.3" x2="782.5" y2="378.3" stroke="#054805" stroke-width="2" />
<text x="769" y="392.9" font-size="8.6" fill="#0a0a0a" text-anchor="start" textLength="18" lengthAdjust="spacingAndGlyphs" >GND</text>
<polyline fill="none" stroke="#054805" stroke-width="2" stroke-linejoin="miter" points="913.39,291.36 913.39,334.79"/>
<path d="M913.39 291.2 L919.2 301.5 L907.4 301.5 Z" fill="none" stroke="#054805" stroke-width="2"/>
<text x="902" y="283.3" font-size="8.6" fill="#0a0a0a" text-anchor="start" letter-spacing="0.3" >+5V</text>
<polyline fill="none" stroke="#054805" stroke-width="2" stroke-linejoin="miter" points="880.21,345.85 880.21,334.79 935.5,334.79 935.5,345.85"/>
<rect x="910.89" y="332.29" width="5" height="5" fill="#054805" stroke="none" stroke-width="1" />
<line x1="880.21" y1="345.85" x2="880.21" y2="356.91" stroke="#8a0000" stroke-width="2" />
<rect x="875.21" y="356.91" width="10" height="33.17" fill="#cacaab" stroke="#8a0000" stroke-width="2" />
<line x1="880.21" y1="390.08" x2="880.21" y2="401.14" stroke="#8a0000" stroke-width="2" />
<line x1="880.21" y1="401.14" x2="880.21" y2="434.31" stroke="#054805" stroke-width="2" />
<rect x="877.71" y="431.81" width="5" height="5" fill="#054805" stroke="none" stroke-width="1" />
<text x="891.21" y="368" font-size="13.8" fill="#0a0a0a" text-anchor="start" >R1</text>
<text x="891.21" y="381.6" font-size="8.8" fill="#0a0a0a" text-anchor="start" textLength="13.3" lengthAdjust="spacingAndGlyphs" >10k</text>
<text x="891.21" y="391" font-size="8.7" fill="#969696" text-anchor="start" letter-spacing="0.3" >&lt;TEXT&gt;</text>
<line x1="935.5" y1="345.85" x2="935.5" y2="356.91" stroke="#8a0000" stroke-width="2" />
<rect x="930.5" y="356.91" width="10" height="33.17" fill="#cacaab" stroke="#8a0000" stroke-width="2" />
<line x1="935.5" y1="390.08" x2="935.5" y2="401.14" stroke="#8a0000" stroke-width="2" />
<line x1="935.5" y1="401.14" x2="935.5" y2="445.37" stroke="#054805" stroke-width="2" />
<rect x="933" y="442.87" width="5" height="5" fill="#054805" stroke="none" stroke-width="1" />
<text x="946.5" y="368" font-size="13.8" fill="#0a0a0a" text-anchor="start" >R2</text>
<text x="946.5" y="381.6" font-size="8.8" fill="#0a0a0a" text-anchor="start" textLength="13.3" lengthAdjust="spacingAndGlyphs" >10k</text>
<text x="946.5" y="391" font-size="8.7" fill="#969696" text-anchor="start" letter-spacing="0.3" >&lt;TEXT&gt;</text>
<polyline fill="none" stroke="#054805" stroke-width="2" stroke-linejoin="miter" points="460.01,312.68 471.07,312.68 471.07,202.1 493.18,202.1"/>
<polyline fill="none" stroke="#054805" stroke-width="2" stroke-linejoin="miter" points="460.01,323.73 482.12,323.73 482.12,179.98 493.18,179.98"/>
<polyline fill="none" stroke="#054805" stroke-width="2" stroke-linejoin="miter" points="260.96,379.02 249.91,379.02 249.91,434.31 1057.14,434.31"/>
<polyline fill="none" stroke="#054805" stroke-width="2" stroke-linejoin="miter" points="260.96,390.08 238.85,390.08 238.85,445.37 1057.14,445.37"/>
<polyline fill="none" stroke="#054805" stroke-width="2" stroke-linejoin="miter" points="659.05,323.73 614.82,323.73 614.82,434.31"/>
<polyline fill="none" stroke="#054805" stroke-width="2" stroke-linejoin="miter" points="659.05,334.79 625.88,334.79 625.88,445.37"/>
<rect x="612.32" y="431.81" width="5" height="5" fill="#054805" stroke="none" stroke-width="1" />
<rect x="623.38" y="442.87" width="5" height="5" fill="#054805" stroke="none" stroke-width="1" />
<rect x="1054.64" y="431.81" width="5" height="5" fill="#054805" stroke="none" stroke-width="1" />
<rect x="1054.64" y="442.87" width="5" height="5" fill="#054805" stroke="none" stroke-width="1" />
<circle cx="648.6" cy="302.5" r="3.3" fill="none" stroke="#2020c0" stroke-width="1"/>
<line x1="643.1" y1="302.5" x2="654.1" y2="302.5" stroke="#2020c0" stroke-width="1" />
<line x1="648.6" y1="297" x2="648.6" y2="308" stroke="#2020c0" stroke-width="1" />
<line x1="1141" y1="109.4" x2="1150.8" y2="119.2" stroke="#6a6a6a" stroke-width="1.1" />
<line x1="1150.8" y1="109.4" x2="1141" y2="119.2" stroke="#6a6a6a" stroke-width="1.1" />
</g>
<path d="M2.5 66.8h19" stroke="#c4c4c4" stroke-width="1.6"/>
<path d="M27 66.8h20.5" stroke="#c4c4c4" stroke-width="1.6"/>
<path d="M24.3 63v555" stroke="#c8c8c8" stroke-width="1"/>
<path d="M25.3 63v555" stroke="#ffffff" stroke-width="1"/>
<path d="M7.3 73.6 L14.9 81.4 L11.6 81.8 L13.9 86 L12.1 87.6 L9.9 83.4 L7.3 85 Z" fill="#3a3a3a" stroke="#111" stroke-width="0.6"/>
<path d="M3.3 96.9h4M3.3 102.3h4M13 99.5h3.9" stroke="#9a9a60" stroke-width="1"/>
<path d="M7.1 94.1 L13.2 99.5 L7.1 104.8 Z" fill="#dada6a" stroke="#8a8a40" stroke-width="0.8"/>
<path d="M3.1 118.8h13.8M10.2 112v13.3" stroke="#6a6a6a" stroke-width="1.3"/>
<rect x="7.1" y="115.8" width="6.2" height="6" fill="#1e64d8" stroke="#183060" stroke-width="0.8"/>
<rect x="3.4" y="133.2" width="14.2" height="9.3" fill="none" stroke="#7a8aa8" stroke-width="0.9" stroke-dasharray="1,1"/>
<text x="4.6" y="141.4" font-size="9.5" font-weight="bold" fill="#1f5fc8" textLength="11.8" lengthAdjust="spacingAndGlyphs">LBL</text>
<path d="M5.8 151.6h10.2" stroke="#303030" stroke-width="1.1" stroke-dasharray="3,0.8,2.5,0.8"/>
<path d="M5.8 153.5h10.2" stroke="#909090" stroke-width="0.7" stroke-dasharray="11"/>
<path d="M5.8 156.5h10.2" stroke="#303030" stroke-width="1.1" stroke-dasharray="5,0.8,4"/>
<path d="M5.8 158.6h10.2" stroke="#303030" stroke-width="1.1" stroke-dasharray="1.2,0.8,9"/>
<path d="M5.8 160.6h10.2" stroke="#8a8a8a" stroke-width="0.8" stroke-dasharray="3,0.8,7"/>
<path d="M5.8 163.4h10.2" stroke="#303030" stroke-width="1.1" stroke-dasharray="4,0.6,6"/>
<path d="M4 176.4h12.9M8.9 171.1v11.1M14.2 171.1v11.1" stroke="#1558c8" stroke-width="1.5"/>
<path d="M3.1 192.2h14.7M3.1 200.4h14.7" stroke="#7a7a40" stroke-width="1"/>
<rect x="7.1" y="189.3" width="6.7" height="14.3" rx="1" fill="#d0d070" stroke="#8a8a40" stroke-width="0.8"/>
<path d="M3.1 207.3h18.7" stroke="#b4b4b4" stroke-width="1"/>
<rect x="2" y="210" width="17.5" height="19" fill="#f8f8f8" stroke="#dcdcdc" stroke-width="1"/>
<path d="M7.1 214.7h8.2l2 1.5l-2 1.6h-8.2z" fill="#d4d460" stroke="#8a8a40" stroke-width="0.7"/>
<path d="M16 221.3h-8.7l-2 1.8l2 1.8h8.7z" fill="#d4d460" stroke="#8a8a40" stroke-width="0.7"/>
<path d="M3.5 236.5h2.5M3.5 239.8h2.5M16 238.1h2" stroke="#2a9a9a" stroke-width="1.2"/>
<path d="M8.4 232v12 M8.4 232 L14.5 238.1 L8.4 244" stroke="#444" stroke-width="0.9" fill="none"/>
<path d="M5.3 251v13M5.3 264h12.5" stroke="#333" stroke-width="0.9"/>
<path d="M4.3 253.5h1.5M4.3 256h1.5M4.3 258.5h1.5M4.3 261h1.5M7.5 264v1.2M10 264v1.2M12.5 264v1.2M15 264v1.2" stroke="#333" stroke-width="0.7"/>
<path d="M7.2 256 C9 251,11 251,12.5 256 C14 259,16 256,17.8 253" stroke="#1a5ad0" stroke-width="1.2" fill="none"/>
<path d="M7.2 259.5 C9 262,11 262,12.5 260 C14 258,16 262,17.8 259.5" stroke="#e05020" stroke-width="1" fill="none"/>
<rect x="3.5" y="272.3" width="14" height="9" rx="1.2" fill="#c8c8c8" stroke="#555" stroke-width="1"/>
<path d="M6.5 275v3.5h8v-3.5" fill="none" stroke="#555" stroke-width="1"/>
<circle cx="10.4" cy="296.4" r="6.8" fill="#b8bcc4" stroke="#707070" stroke-width="0.8"/>
<path d="M6.5 298.5 C8 302,9.5 300,10.4 296.4 C11.3 292.5,13 291,14.5 294" stroke="#1a4ad0" stroke-width="1.4" fill="none"/>
<text x="2.5" y="315" font-size="7" font-weight="bold" fill="#1a5ac8">V</text>
<path d="M4 323 L7 320" stroke="#555" stroke-width="0.8"/>
<path d="M6 321 L13 314.5" stroke="#7a7a30" stroke-width="3"/><path d="M6 321 L13 314.5" stroke="#e6e66a" stroke-width="1.8"/>
<path d="M13 314.5 L15.5 311.5 C16.5 310.5,17.5 311,17.7 313.5" stroke="#444" stroke-width="0.8" fill="none"/>
<text x="3" y="334.5" font-size="7" font-weight="bold" fill="#1a5ac8" style="font-family:Liberation Serif,serif">I</text>
<path d="M4 342 L7 339" stroke="#555" stroke-width="0.8"/>
<path d="M6 340 L13 333.5" stroke="#7a7a30" stroke-width="3"/><path d="M6 340 L13 333.5" stroke="#e6e66a" stroke-width="1.8"/>
<path d="M13 333.5 L15.5 330.5 C16.5 329.5,17.5 330,17.7 332.5" stroke="#444" stroke-width="0.8" fill="none"/>
<rect x="3.6" y="348.5" width="14" height="8.5" rx="1.5" fill="#e8e8e8" stroke="#555" stroke-width="1"/>
<path d="M5.5 355.5 Q10.5 349.5 15.5 355.5" stroke="#2a5ad0" stroke-width="1" fill="none"/><path d="M10 356 L12.5 351" stroke="#e05020" stroke-width="0.9"/>
<rect x="6.2" y="357" width="9" height="5" fill="#b0b4bc" stroke="#555" stroke-width="0.9"/>
<path d="M7.5 359h4M7.5 361h4" stroke="#fff" stroke-width="0.6"/><rect x="12" y="358.5" width="2" height="1.5" fill="#e0d020"/>
<path d="M3.1 365.5h18.7" stroke="#b4b4b4" stroke-width="1"/>
<path d="M3.8 383.5 L17.3 370.5" stroke="#2a2a2a" stroke-width="1.3"/>
<rect x="4.5" y="390.7" width="12.3" height="11.8" fill="#6fb4b0" stroke="#3a4a4a" stroke-width="0.9"/>
<circle cx="10.5" cy="415.5" r="6.8" fill="#5ea4a0" stroke="#3a4a4a" stroke-width="0.9"/>
<path d="M4.3 441.5h11.5 M4.3 441.5v-11.5" stroke="#4a80e0" stroke-width="0.9" stroke-dasharray="1,1" fill="none"/>
<path d="M4.3 430 Q15.5 430.5 15.8 441.5" stroke="#222" stroke-width="0.9" fill="none"/>
<ellipse cx="7.6" cy="454.3" rx="4.2" ry="5.6" fill="#5ea4a0" stroke="#3a4a4a" stroke-width="0.7"/>
<ellipse cx="13.6" cy="454.3" rx="4.2" ry="5.6" fill="#5ea4a0" stroke="#3a4a4a" stroke-width="0.7"/>
<text x="10.2" y="480.5" font-size="18.5" font-weight="bold" fill="#2a2a2a" text-anchor="middle" style="font-family:Liberation Serif,serif">A</text>
<rect x="4.3" y="487" width="12.5" height="12.3" fill="#4e8e8c" stroke="#2a2a2a" stroke-width="0.9"/>
<path d="M14 490 h-7 v3 h6.5 v3 h-7" stroke="#101010" stroke-width="1.5" fill="none"/>
<path d="M3.3 512h13.7M10.2 505.6v13" stroke="#555" stroke-width="0.9"/>
<rect x="7.8" y="509.6" width="4.8" height="4.8" fill="#4e9a98" stroke="#333" stroke-width="0.6"/>
<path d="M40.5 77.5 A5.3 5.3 0 1 0 41.6 82.5" stroke="#1f4aa8" stroke-width="2" fill="none"/><path d="M37.8 74.5 L42.5 74.5 L42 79.5 Z" fill="#1f4aa8"/>
<path d="M31.8 97.5 A5.3 5.3 0 1 1 30.9 102" stroke="#1f4aa8" stroke-width="2" fill="none"/><path d="M34.5 94.5 L29.8 94.5 L30.3 99.5 Z" fill="#1f4aa8"/>
<rect x="27.2" y="110.2" width="20" height="14" fill="#fff"/>
<path d="M27.5 124.3V110.5H47.3" stroke="#646464" stroke-width="1" fill="none"/>
<text x="28.5" y="120.6" font-size="10" fill="#000">0°</text>
<path d="M29 129.3h18.5" stroke="#b4b4b4" stroke-width="1"/>
<path d="M29.2 141.5 L33.8 137.8 V140.3 H36.3 V142.7 H33.8 V145.3 Z" fill="#6a8ad8"/>
<path d="M43.2 141.5 L38.6 137.8 V140.3 H36.1 V142.7 H38.6 V145.3 Z" fill="#1e3c94"/>
<path d="M35.5 153.7 L39.7 158 H37 V161.2 H34 V158 H31.3 Z" fill="#1e3c94"/>
<path d="M35.5 168.5 L39.7 164.2 H37 V161 H34 V164.2 H31.3 Z" fill="#6a8ad8"/>
<rect x="52.5" y="66.5" width="105" height="131.5" fill="#e1e1d1" stroke="#a0a0a0" stroke-width="1"/>
<path d="M52.5 198V66.5H157.5" stroke="#707070" stroke-width="1" fill="none"/>
<rect x="60.8" y="77.3" width="88" height="111" fill="none" stroke="#4848c8" stroke-width="1.2"/>
<rect x="67.5" y="99.6" width="80.5" height="76.6" fill="none" stroke="#30c030" stroke-width="1.2"/>
<g stroke="#1a1a1a" fill="none" stroke-width="1">
<rect x="76" y="104.8" width="12.3" height="42"/>
<rect x="94.6" y="114.2" width="10.3" height="12.4"/><rect x="96.3" y="116" width="7" height="9"/>
<path d="M91.3 117v19M72.8 143.5v10M71.7 150.6h65.5M71.7 152.8h65.5M102.9 136.5v16M102.9 136.5h3"/>
<rect x="107" y="133.7" width="6.5" height="6.5"/><path d="M113.5 137h2v4l-1 1"/>
<path d="M123.5 150v-13.2h5v13.2M126 136.8v-2.5M123.5 140v6M128.5 140v6"/>
</g>
<rect x="52.5" y="203.5" width="105" height="15" fill="#c0d0e0" stroke="#8a8a8a" stroke-width="1"/>
<rect x="53.3" y="204.2" width="14" height="13.6" fill="#f4f4f4" stroke="#ffffff" stroke-width="0.8"/>
<path d="M67.5 204.2v13.8H53.3" stroke="#6a6a6a" stroke-width="1" fill="none"/>
<text x="60.3" y="215" font-size="10.5" fill="#000" text-anchor="middle">P</text>
<text x="85.3" y="214.6" font-size="10.2" fill="#000" textLength="53.4" lengthAdjust="spacingAndGlyphs">TERMINALS</text>
<rect x="52.5" y="218.5" width="105" height="396" fill="#ffffff" stroke="#8a8a8a" stroke-width="1"/>
<path d="M52.5 614.5V218.5" stroke="#646464" stroke-width="1"/>
<rect x="53" y="264.5" width="104" height="10.9" fill="#0078d7"/>
<text x="54.6" y="228.20" font-size="10.4" fill="#000" textLength="41.8" lengthAdjust="spacingAndGlyphs">DEFAULT</text>
<text x="54.6" y="239.57" font-size="10.4" fill="#000" textLength="28" lengthAdjust="spacingAndGlyphs">INPUT</text>
<text x="54.6" y="250.94" font-size="10.4" fill="#000" textLength="38.3" lengthAdjust="spacingAndGlyphs">OUTPUT</text>
<text x="54.6" y="262.31" font-size="10.4" fill="#000" textLength="24.7" lengthAdjust="spacingAndGlyphs">BIDIR</text>
<text x="54.6" y="273.68" font-size="10.4" fill="#ffffff" textLength="35.5" lengthAdjust="spacingAndGlyphs">POWER</text>
<text x="54.6" y="285.05" font-size="10.4" fill="#000" textLength="41.6" lengthAdjust="spacingAndGlyphs">GROUND</text>
<text x="54.6" y="296.42" font-size="10.4" fill="#000" textLength="18.7" lengthAdjust="spacingAndGlyphs">BUS</text>
<path d="M0 38.9h1200" stroke="#fafafa" stroke-width="0.8"/>
<defs><linearGradient id="docg" x1="0" y1="0" x2="1" y2="1"><stop offset="0" stop-color="#ffffff"/><stop offset="1" stop-color="#c8d4dc"/></linearGradient><linearGradient id="flop" x1="0" y1="0" x2="0" y2="1"><stop offset="0" stop-color="#8c8cf0"/><stop offset="1" stop-color="#5a5ac8"/></linearGradient><radialGradient id="infog" cx="0.35" cy="0.3" r="0.8"><stop offset="0" stop-color="#50e050"/><stop offset="1" stop-color="#067006"/></radialGradient></defs>
<path d="M2.9 41v20" stroke="#ffffff" stroke-width="1"/><path d="M4.1 41v20.3h-1.5" stroke="#b8b8b8" stroke-width="1" fill="none"/>
<path d="M10.7 45 h7.199999999999999 l3 3 v9.7 h-10.2 z" fill="url(#docg)" stroke="#3a3a3a" stroke-width="0.9"/>
<path d="M28.3 46.5h5l1 1.3h5.5v8h-11.5z" fill="#e8d870" stroke="#8a7030" stroke-width="0.8"/>
<path d="M30 50h11.8l-3 5.8h-10.5z" fill="#f4e890" stroke="#8a7030" stroke-width="0.8"/>
<path d="M35 46 q2.5-2.5 5-0.5" stroke="#3050a0" stroke-width="0.9" fill="none"/><path d="M40.5 44.5l1.2 2.5l-2.2 0.3z" fill="#2040a0"/>
<g transform="translate(46.2,44.2) scale(1.0)"><path d="M0 0h13l1.5 1.5v12.8h-14.5z" fill="url(#flop)" stroke="#4a4aa0" stroke-width="0.8"/><rect x="3" y="0.7" width="8" height="5.5" fill="#e4ecf0" stroke="#4a4aa0" stroke-width="0.6"/><rect x="4.3" y="9.5" width="5" height="4.3" fill="#d0d0d8"/></g>
<path d="M66.7 42v18.5" stroke="#b8b8b8" stroke-width="1"/>
<rect x="77.5" y="44.3" width="8.5" height="10.5" fill="#f0f0f0" stroke="#505050" stroke-width="0.8"/>
<path d="M80 49h4M80 51h4M80 53h3" stroke="#e07050" stroke-width="0.8"/>
<path d="M73.5 48 q3-3 7-1.5" stroke="#3060b0" stroke-width="1" fill="none"/>
<g transform="translate(72,48.8) scale(0.62)"><path d="M0 0h13l1.5 1.5v12.8h-14.5z" fill="url(#flop)" stroke="#4a4aa0" stroke-width="0.8"/><rect x="3" y="0.7" width="8" height="5.5" fill="#e4ecf0" stroke="#4a4aa0" stroke-width="0.6"/><rect x="4.3" y="9.5" width="5" height="4.3" fill="#d0d0d8"/></g>
<rect x="90.3" y="44.3" width="8.5" height="10.5" fill="#f0f0f0" stroke="#707070" stroke-width="0.8"/>
<path d="M92 47.5h1M95 47.5h1M92 50h1M95 50h1M92 52.5h1M95 52.5h1" stroke="#e06040" stroke-width="1"/>
<path d="M96 47 q3-3 7.5 0" stroke="#3060b0" stroke-width="1" fill="none"/>
<g transform="translate(96.5,49) scale(0.6)"><path d="M0 0h13l1.5 1.5v12.8h-14.5z" fill="url(#flop)" stroke="#4a4aa0" stroke-width="0.8"/><rect x="3" y="0.7" width="8" height="5.5" fill="#e4ecf0" stroke="#4a4aa0" stroke-width="0.6"/><rect x="4.3" y="9.5" width="5" height="4.3" fill="#d0d0d8"/></g>
<path d="M110.4 42v18.5" stroke="#b8b8b8" stroke-width="1"/>
<rect x="120" y="44" width="6" height="4.5" fill="#dfe6f0" stroke="#5060a0" stroke-width="0.7"/>
<rect x="116" y="48" width="14" height="7.5" rx="1.5" fill="#c8cad0" stroke="#505868" stroke-width="0.8"/>
<rect x="120" y="54" width="6" height="4" fill="#dfe6f0" stroke="#5060a0" stroke-width="0.7"/>
<path d="M122.7 51.5h3.6M124.5 49.7v3.6" stroke="#10c010" stroke-width="1.4"/>
<path d="M136.3 45 h7.199999999999999 l3 3 v9.7 h-10.2 z" fill="url(#docg)" stroke="#3a3a3a" stroke-width="0.9"/>
<path d="M138.5 49.5h5M138.5 51.5h5M138.5 53.5h5" stroke="#555" stroke-width="1.1" stroke-dasharray="1.5,0.8"/>
<path d="M155.6 40v22.5" stroke="#c4c4c4" stroke-width="1"/>
<path d="M159.9 41v20" stroke="#ffffff" stroke-width="1"/><path d="M161.1 41v20.3h-1.5" stroke="#b8b8b8" stroke-width="1" fill="none"/>
<path d="M168.2 44.5 h7.5 l3 3 v10.2 h-10.5 z" fill="url(#docg)" stroke="#3a3a3a" stroke-width="0.9"/>
<path d="M171 50 q1.5-3 5-2.5" stroke="#20a020" stroke-width="1.6" fill="none"/><path d="M175.5 45.5l2 2.2l-2.5 1.2z" fill="#109010"/>
<path d="M175.8 52 q-1.5 3-5 2.5" stroke="#20a020" stroke-width="1.6" fill="none"/><path d="M171.3 56.5l-2-2.2l2.5-1.2z" fill="#109010"/>
<rect x="183.3" y="41.2" width="18.5" height="19" fill="#f7f7f7" stroke="#dedede" stroke-width="1"/>
<path d="M186.3 46h2.4M187.5 44.8v2.4" stroke="#222" stroke-width="0.9"/>
<path d="M191.3 46h2.4M192.5 44.8v2.4" stroke="#222" stroke-width="0.9"/>
<path d="M196.3 46h2.4M197.5 44.8v2.4" stroke="#222" stroke-width="0.9"/>
<path d="M186.3 51h2.4M187.5 49.8v2.4" stroke="#222" stroke-width="0.9"/>
<path d="M191.3 51h2.4M192.5 49.8v2.4" stroke="#222" stroke-width="0.9"/>
<path d="M196.3 51h2.4M197.5 49.8v2.4" stroke="#222" stroke-width="0.9"/>
<path d="M186.3 56h2.4M187.5 54.8v2.4" stroke="#222" stroke-width="0.9"/>
<path d="M191.3 56h2.4M192.5 54.8v2.4" stroke="#222" stroke-width="0.9"/>
<path d="M196.3 56h2.4M197.5 54.8v2.4" stroke="#222" stroke-width="0.9"/>
<path d="M187.5 47.5v3M192.5 47.5v3M197.5 47.5v3M187.5 52.5v3M197.5 52.5v3M189 51h2M194 51h2" stroke="#444" stroke-width="0.6" stroke-dasharray="0.8,0.8"/>
<path d="M205 42v18.5" stroke="#b8b8b8" stroke-width="1"/>
<path d="M211 50.5h13M217.5 44v13" stroke="#222" stroke-width="1"/><rect x="215.2" y="48.2" width="4.6" height="4.6" fill="#d8c850" stroke="#8a7a30" stroke-width="0.5"/>
<path d="M230.7 42v18.5" stroke="#b8b8b8" stroke-width="1"/>
<path d="M237.5 51h11M243 45.5v11" stroke="#2a6ad0" stroke-width="2.2"/>
<path d="M243 44 l3 3.2h-6z M243 58 l3-3.2h-6z M236 51 l3.2-3v6z M250 51 l-3.2-3v6z" fill="#2a6ad0" stroke="#1a4aa0" stroke-width="0.4"/>
<path d="M263.3 53.0 l5 5" stroke="#707070" stroke-width="2.6" stroke-linecap="round"/>
<circle cx="260.3" cy="50.0" r="5" fill="#dde6ee" stroke="#606a74" stroke-width="1.2"/>
<path d="M257.3 50h6M260.3 47v6" stroke="#404850" stroke-width="1.3"/>
<path d="M281.8 53.0 l5 5" stroke="#707070" stroke-width="2.6" stroke-linecap="round"/>
<circle cx="278.8" cy="50.0" r="5" fill="#dde6ee" stroke="#606a74" stroke-width="1.2"/>
<path d="M275.8 50h6" stroke="#404850" stroke-width="1.3"/>
<path d="M300.2 53.0 l5 5" stroke="#707070" stroke-width="2.6" stroke-linecap="round"/>
<circle cx="297.2" cy="50.0" r="5" fill="#dde6ee" stroke="#606a74" stroke-width="1.2"/>
<rect x="294.7" y="47.5" width="5" height="5" fill="#909aa4" stroke="#404850" stroke-width="0.8"/>
<path d="M310.3 47v10.5h9" stroke="#222" stroke-width="0.8" stroke-dasharray="1,1" fill="none"/>
<path d="M320.0 52.8 l5 5" stroke="#707070" stroke-width="2.6" stroke-linecap="round"/>
<circle cx="317.0" cy="49.8" r="5" fill="#dde6ee" stroke="#606a74" stroke-width="1.2"/>

<path d="M331.3 40v22.5" stroke="#c4c4c4" stroke-width="1"/>
<path d="M335.4 41v20" stroke="#ffffff" stroke-width="1"/><path d="M336.6 41v20.3h-1.5" stroke="#b8b8b8" stroke-width="1" fill="none"/>
<path d="M346.5 48 C352 45.8,356 48.5,355 52.3 C354.3 55,352 56.5,349.3 57.3" stroke="#2a6ad0" stroke-width="2.3" fill="none"/>
<path d="M343 45.6 L349.3 45.6 L345.2 51.8 Z" fill="#2a6ad0"/>
<path d="M371 48 C365.5 45.8,361.5 48.5,362.5 52.3 C363.2 55,365.5 56.5,368.2 57.3" stroke="#a4a4a4" stroke-width="2.3" fill="none"/>
<path d="M374.3 45.6 L368 45.6 L372.3 51.8 Z" fill="#a4a4a4"/>
<path d="M380.7 42v18.5" stroke="#b8b8b8" stroke-width="1"/>
<path d="M389 44.5l6.5 9M398.5 44.5l-6.5 9" stroke="#a0a0a0" stroke-width="2"/><circle cx="390.5" cy="55.5" r="2.2" fill="none" stroke="#a0a0a0" stroke-width="1.6"/><circle cx="397" cy="55.5" r="2.2" fill="none" stroke="#a0a0a0" stroke-width="1.6"/>
<rect x="406" y="44.5" width="7" height="9" fill="#fff" stroke="#333" stroke-width="0.8"/><path d="M407.5 47h4M407.5 49h4M407.5 51h4" stroke="#555" stroke-width="0.6"/>
<rect x="411" y="49" width="7.5" height="9" fill="#fff" stroke="#203050" stroke-width="0.8"/><path d="M412.5 51.5h4.5M412.5 53.5h4.5M412.5 55.5h4.5" stroke="#203a70" stroke-width="0.7"/>
<path d="M424 47h8l2 2v3h3.5v6h-10.5v-3h-3z" fill="#a4a4a4" stroke="#8a8a8a" stroke-width="0.6"/><rect x="426" y="45" width="4" height="3" fill="#a4a4a4"/>
<path d="M443.2 42v18.5" stroke="#b8b8b8" stroke-width="1"/>
<path d="M449 44h14v4.7h-4.5v1.7h2.5v2.3h2v5.3h-14v-5.3h2v-2.3h2.5v-1.7h-4.5z" fill="#a2a2a2"/>
<path d="M467.2 44h14v4.7h-5.1v1.7h2.5v2.3h2.6v5.3h-14v-5.3h2.6v-2.3h2.5v-1.7h-5.1z" fill="#a2a2a2"/><rect x="468.4" y="45" width="11.6" height="2.8" fill="#f4f4f4"/><rect x="473" y="45.7" width="2.5" height="4" fill="#a2a2a2"/>
<rect x="486" y="44" width="14" height="14" fill="#a2a2a2"/>
<rect x="504.2" y="44" width="14" height="14" fill="#a2a2a2"/>
<path d="M524 42v18.5" stroke="#b8b8b8" stroke-width="1"/>
<path d="M538.5 52.8 l5 5" stroke="#505860" stroke-width="2.4" stroke-linecap="round"/><circle cx="535.8" cy="50.2" r="5.5" fill="#d8e4ec" stroke="#607080" stroke-width="1.1"/>
<path d="M533.5 46.5 l5 3.7 l-5 3.7z" fill="#e0d860" stroke="#8a8030" stroke-width="0.6"/><path d="M538.5 50.2h5" stroke="#8a8030" stroke-width="0.8"/>
<path d="M549 50h3M549 54h3M552 47.5v9l6.5-4.5z M558.5 52h3" fill="#a8a8a8" stroke="#a0a0a0" stroke-width="1.2"/><path d="M556.2 47.2h5.8M559.1 44.3v5.8" stroke="#a0a0a0" stroke-width="1.5"/>
<rect x="568.5" y="46.5" width="10" height="10.5" fill="#a8a8a8"/><path d="M567 48h13M567 50.5h13M567 53h13M567 55.5h13M570 45v13.5M572.5 45v13.5M575 45v13.5M577.5 45v13.5" stroke="#a8a8a8" stroke-width="0.8"/>
<path d="M585.5 57.5 l9-9" stroke="#a0a0a0" stroke-width="2.2"/><path d="M591 45.5l4-1.5l4.5 4.5l-2.5 2.5l-2.5-1.5l-1.5 1.5l-2.5-2.5z" fill="#a0a0a0"/>
<path d="M606.6 40v22.5" stroke="#c4c4c4" stroke-width="1"/>
<path d="M609.9 41v20" stroke="#ffffff" stroke-width="1"/><path d="M611.1 41v20.3h-1.5" stroke="#b8b8b8" stroke-width="1" fill="none"/>
<rect x="616" y="41.3" width="17.5" height="18.5" fill="#f6f6f6"/>
<path d="M616.4 59.8V41.5H633.5" stroke="#a8a8a8" stroke-width="1" fill="none"/>
<path d="M624.5 46.5 h3 a2.2 2.2 0 0 1 0 4.4 h-1.2 v4.5" stroke="#2a64d8" stroke-width="1.3" fill="none"/>
<path d="M625.5 50.5 l-1.5 2 v2" stroke="#e05a30" stroke-width="1" fill="none"/>
<path d="M626 56.8 h-3 a2.3 2.3 0 0 1 0-4.6 h1.5" stroke="#e04a18" stroke-width="1.4" fill="none"/>
<rect x="618.4" y="45" width="6" height="3.8" rx="0.8" fill="#58c848" stroke="#2a7a2a" stroke-width="0.6"/>
<rect x="626.6" y="54.6" width="5.8" height="3.8" rx="0.8" fill="#58c848" stroke="#2a7a2a" stroke-width="0.6"/>
<path d="M637.5 42v18.5" stroke="#b8b8b8" stroke-width="1"/>
<path d="M645 55.5 v-4.5 l1.3-1.5 v-4 h2.5 v4 l1 1.5 v4.5 z M656.5 55.5 v-4.5 l-1.3-1.5 v-4 h-2.5 v4 l-1 1.5 v4.5 z" fill="#b8c8d0" stroke="#404850" stroke-width="0.9"/>
<path d="M646.6 51.5v3.5M654.8 51.5v3.5" stroke="#f0f8ff" stroke-width="0.9"/><circle cx="650.8" cy="50.5" r="0.9" fill="#303840"/>
<path d="M661.6 46.4h5" stroke="#909090" stroke-width="2"/>
<path d="M663 56 l6.8-6.8" stroke="#505860" stroke-width="2.6" stroke-linecap="round"/><path d="M663 56 l6.8-6.8" stroke="#a8c0d0" stroke-width="1.3" stroke-linecap="round"/>
<path d="M673.8 45 a3.2 3.2 0 1 0 1.8 3.2 l-2 0.3 l-1.2-1.5 z" fill="#b0c4d0" stroke="#505860" stroke-width="0.8"/>
<text x="670.8" y="57.6" font-size="7.8" fill="#303030">A</text>
<path d="M681 42v18.5" stroke="#b8b8b8" stroke-width="1"/>
<path d="M688 44.2 h8 l3 3 v10.6 h-11 z" fill="#5a5a5a" stroke="#2a2a2a" stroke-width="0.9"/>
<path d="M689.5 46.5h8M689.5 49.8h8M689.5 52.6h8M689.5 55h8" stroke="#50e040" stroke-width="0.9"/><path d="M693.7 45.5v11" stroke="#50e040" stroke-width="0.8"/>
<rect x="692.2" y="48.3" width="3" height="6" rx="1.5" fill="#60d8f0" stroke="#208090" stroke-width="0.5"/>
<path d="M706 45 h7.800000000000001 l3 3 v9.5 h-10.8 z" fill="url(#docg)" stroke="#3a3a3a" stroke-width="0.9"/>
<path d="M708.5 53h6M711.5 50v6" stroke="#20a020" stroke-width="1.6"/>
<path d="M724.5 45 h8 l3 3 v9.5 h-11 z" fill="#d8d8d8" stroke="#606060" stroke-width="0.9"/>
<path d="M724 45.5l13 12M737 45.5l-13 12" stroke="#e05530" stroke-width="1.3"/>
<path d="M744.3 55 L747.5 49 M752.5 55 L750 49" stroke="#a4a4a4" stroke-width="2"/>
<rect x="745.3" y="44" width="7.4" height="4.5" fill="#a4a4a4"/><rect x="742.3" y="54" width="4" height="3.8" fill="#a4a4a4"/><rect x="750.3" y="54" width="4.4" height="3.8" fill="#a4a4a4"/>
<path d="M752.5 45 q3 1 2.8 4.5 l-1.5 2.5" stroke="#b4b4b4" stroke-width="1.3" fill="none"/>
<path d="M762 42v18.5" stroke="#b8b8b8" stroke-width="1"/>
<path d="M768.5 45 h7.800000000000001 l3 3 v9.5 h-10.8 z" fill="url(#docg)" stroke="#3a3a3a" stroke-width="0.9"/>
<text x="773.8" y="55.6" font-size="10" font-weight="bold" fill="#7a7a30" text-anchor="middle">$</text>
<path d="M786.8 45 h8 l3 3 v9.5 h-11 z" fill="url(#docg)" stroke="#3a3a3a" stroke-width="0.9"/>
<path d="M794 47.5l-4 5h3l-2.5 4.5l4.5-5.5h-3l2.5-4z" fill="#2a80e0"/>
<path d="M805.6 42v18.5" stroke="#b8b8b8" stroke-width="1"/>
<rect x="811.7" y="44.5" width="14.3" height="13" fill="#e04818"/><rect x="811.7" y="44.5" width="14.3" height="5" fill="#f06030" opacity="0.6"/>
<text x="812.6" y="54.8" font-size="8.5" font-weight="bold" fill="#fff" textLength="12.6" lengthAdjust="spacingAndGlyphs">ARES</text>
<path d="M0 615.2h1200" stroke="#ffffff" stroke-width="0.8"/>
<path d="M3 620v16.5" stroke="#c0c0c0" stroke-width="1"/>
<rect x="8.7" y="620" width="138" height="15.8" fill="#1a1a1a"/>
<rect x="9.7" y="621" width="33.599999999999994" height="13.8" fill="#e6e6e6"/>
<path d="M9.7 634.8V621H43.3" stroke="#ffffff" stroke-width="1" fill="none"/>
<path d="M10.2 634.3H42.8V621.5" stroke="#a0a0a0" stroke-width="1" fill="none"/>
<rect x="43.8" y="621" width="33.5" height="13.8" fill="#e6e6e6"/>
<path d="M43.8 634.8V621H77.3" stroke="#ffffff" stroke-width="1" fill="none"/>
<path d="M44.3 634.3H76.8V621.5" stroke="#a0a0a0" stroke-width="1" fill="none"/>
<rect x="77.8" y="621" width="33.7" height="13.8" fill="#e6e6e6"/>
<path d="M77.8 634.8V621H111.5" stroke="#ffffff" stroke-width="1" fill="none"/>
<path d="M78.3 634.3H111.0V621.5" stroke="#a0a0a0" stroke-width="1" fill="none"/>
<rect x="112" y="621" width="33.69999999999999" height="13.8" fill="#e6e6e6"/>
<path d="M112 634.8V621H145.7" stroke="#ffffff" stroke-width="1" fill="none"/>
<path d="M112.5 634.3H145.2V621.5" stroke="#a0a0a0" stroke-width="1" fill="none"/>
<path d="M23.8 623.8 L30 628.3 L23.8 632.8 Z" fill="#000"/>
<rect x="55.8" y="623.8" width="2" height="9" fill="#000"/><path d="M60 623.8 L66 628.3 L60 632.8 Z" fill="#000"/>
<rect x="91.2" y="623.8" width="2.5" height="9" fill="#000"/><rect x="97" y="623.8" width="2.4" height="9" fill="#000"/>
<rect x="124.8" y="624.2" width="8.7" height="8.6" fill="#000"/>
<path d="M151.5 636.7V620.3H707.3" stroke="#a0a0a0" stroke-width="1" fill="none"/><path d="M151.5 636.7H707.3V620.3" stroke="#ffffff" stroke-width="1" fill="none"/>
<circle cx="160" cy="627.8" r="5.8" fill="url(#infog)"/><rect x="159" y="626.3" width="2.2" height="5" fill="#fff"/><circle cx="160.1" cy="624.6" r="1.2" fill="#fff"/>
<text x="408.2" y="632.5" font-size="10.6" fill="#000" text-anchor="start" textLength="60" lengthAdjust="spacingAndGlyphs" >14 Message(s)</text>
<path d="M712.7 618v20" stroke="#c8c8c8" stroke-width="1"/><path d="M713.7 618v20" stroke="#fff" stroke-width="1"/>
<path d="M716.8 620v15.5" stroke="#fff" stroke-width="1"/><path d="M718.2 620v15.5h-1.5" stroke="#b0b0b0" stroke-width="1" fill="none"/>
<path d="M722.5 634.7V621.6H1072.7" stroke="#a0a0a0" stroke-width="1" fill="none"/><path d="M722.5 634.7H1072.7V621.6" stroke="#ffffff" stroke-width="1" fill="none"/>
<text x="724.8" y="632.2" font-size="10.6" fill="#000" text-anchor="start" textLength="51.5" lengthAdjust="spacingAndGlyphs" >Root sheet 1</text>
<path d="M1077.3 618v20" stroke="#c8c8c8" stroke-width="1"/><path d="M1078.3 618v20" stroke="#fff" stroke-width="1"/>
<path d="M1080.8 620v15.5" stroke="#fff" stroke-width="1"/><path d="M1082.2 620v15.5h-1.5" stroke="#b0b0b0" stroke-width="1" fill="none"/>
<path d="M1086.8 634V621.3H1195.3" stroke="#a0a0a0" stroke-width="1" fill="none"/><path d="M1086.8 634H1195.3V621.3" stroke="#ffffff" stroke-width="1" fill="none"/>
<text x="1094" y="632.2" font-size="10.6" fill="#000" text-anchor="start" textLength="34" lengthAdjust="spacingAndGlyphs" >+4500.0</text>
<text x="1137.3" y="632.2" font-size="10.6" fill="#000" text-anchor="start" textLength="34" lengthAdjust="spacingAndGlyphs" >+1700.0</text>
<text x="1186.8" y="632.2" font-size="10.6" fill="#2020a0" text-anchor="start" textLength="7.2" lengthAdjust="spacingAndGlyphs" >th</text>
<rect x="0" y="639" width="1200" height="35" fill="#0a0f16"/>
<rect x="42" y="639" width="302.5" height="35" fill="#f0f0f0"/>
<path d="M42 639.5h302.5" stroke="#d8d8d8" stroke-width="1"/>
<path d="M13.8 650.3 L20.3 649.3 V656 H13.8 Z M21.3 649.1 L28.2 648.2 V656 H21.3 Z M13.8 657 H20.3 V663.7 L13.8 662.8 Z M21.3 657 H28.2 V664.8 L21.3 663.9 Z" fill="#ffffff"/>
<circle cx="59.7" cy="657" r="8" fill="none" stroke="#1a1a1a" stroke-width="2.2"/>
<text x="77.4" y="662.2" font-size="14.2" fill="#444" text-anchor="start" textLength="67" lengthAdjust="spacingAndGlyphs" >Search here</text>
<rect x="323.6" y="649.5" width="5" height="9" rx="2.5" fill="none" stroke="#333" stroke-width="1.1"/><path d="M321.5 656 q0 4.5 4.6 4.5 q4.6 0 4.6-4.5 M326.1 660.5v3 M323.5 663.5h5" stroke="#333" stroke-width="1" fill="none"/>
<path d="M368.5 647 c-6.5 0-10 4.5-10 9.5 c0 6 4.5 9.5 10 9.5 c3.5 0 6-1 8-2.5 v-3.8 c-2 1.5-4.5 2.5-7 2.5 c-3.5 0-6-2-6-5 h13.8 c0.3-6-3-10.2-8.8-10.2 z M363.8 654.5 c0.5-2.8 2.5-4.3 4.8-4.3 c2.4 0 4 1.6 4 4.3 z" fill="#0c7ad6"/>
<path d="M358.7 652 c2-4 6-5.5 9-5" stroke="#0c7ad6" stroke-width="2" fill="none"/>
<rect x="401.5" y="649.5" width="18.5" height="15" fill="#f6d777"/><rect x="401.5" y="648.5" width="7" height="2" fill="#f0c850"/>
<path d="M405.5 664.5 v-5.5 h10.5 v5.5 h-3 v-2.5 h-4.5 v2.5 z" fill="#3aa4e6"/>
<rect x="393.5" y="672" width="28" height="2" fill="#a8d8f4"/><rect x="421.5" y="672" width="7.5" height="2" fill="#7aa0bc"/>
<path d="M443.8 650.5h20v13.5c0 1.2-0.8 2-2 2h-16c-1.2 0-2-0.8-2-2z" fill="#ffffff"/><path d="M449.5 650.5 v-1.5 q0-3 3.5-3 h2 q3.5 0 3.5 3 v1.5" stroke="#ffffff" stroke-width="1.2" fill="none"/>
<rect x="449" y="654" width="3.8" height="3.8" fill="#f25022"/><rect x="453.8" y="654" width="3.8" height="3.8" fill="#7fba00"/><rect x="449" y="658.8" width="3.8" height="3.8" fill="#00a4ef"/><rect x="453.8" y="658.8" width="3.8" height="3.8" fill="#ffb900"/>
<circle cx="497" cy="656.3" r="9.8" fill="#db4437"/>
<path d="M497 656.3 L488.5 651.4 A9.8 9.8 0 0 0 497 666.0999999999999 Z" fill="#0f9d58"/>
<path d="M497 656.3 L497 666.0999999999999 A9.8 9.8 0 0 0 505.5 651.4 Z" fill="#f4c20d"/>
<circle cx="497" cy="656.3" r="4.6" fill="#ffffff"/><circle cx="497" cy="656.3" r="3.6" fill="#4285f4"/>
<rect x="530.7" y="646.5" width="18.3" height="16.8" fill="#d40808"/>
<path d="M534.5 660 q4-3 6-10 q0.5-2-0.5-2.5 q-1 0.5-0.5 2.5 q2 5 6.5 6.5 q1.5 0 1.5-0.8 q-5-1-12 3.5 q-1.5 1.5-0.5 1.5 z" stroke="#fff" stroke-width="0.9" fill="none"/>
<rect x="523" y="672" width="34.8" height="2" fill="#a8d8f4"/>
<circle cx="583" cy="656" r="10" fill="#00979c"/>
<path d="M583 656 c-1.5-2.5-3-3.5-4.8-3.5 c-2 0-3.5 1.5-3.5 3.5 c0 2 1.5 3.5 3.5 3.5 c1.8 0 3.3-1 4.8-3.5 c1.5-2.5 3-3.5 4.8-3.5 c2 0 3.5 1.5 3.5 3.5 c0 2-1.5 3.5-3.5 3.5 c-1.8 0-3.3-1-4.8-3.5 z" fill="none" stroke="#fff" stroke-width="1.6"/>
<rect x="565.9" y="672" width="35" height="2" fill="#a8d8f4"/>
<rect x="605" y="639" width="42.3" height="35" fill="#3c3f46"/>
<rect x="605" y="672" width="42.3" height="2" fill="#a8d8f4"/>
<rect x="616" y="647.6" width="21" height="16.6" fill="#0000f0"/>
<path d="M619 654.5v5h1.5 M625 654.5h-3.2v2.5h3v2.5h-3.2 M627 654.5v5h1.5 M634.5 654.5h-4.5v2.5h4.3v2.5h-4.5" stroke="#fff" stroke-width="1.5" fill="none"/><path d="M619 652v0.8M627 652v0.8" stroke="#fff" stroke-width="1.3"/>
<path d="M618 654v5.5h2.5 M624 654h-3 v2.8h3v2.7h-3 M626 654v5.5h2 M634.5 654h-4.5v2.8h4.5v2.7h-4.5" stroke="#fff" stroke-width="1.3" fill="none" opacity="0"/>
<circle cx="970" cy="652.3" r="2.2" fill="none" stroke="#fff" stroke-width="1"/><path d="M965.5 663 q0-5 4.5-6 q4.5 1 4.5 6" stroke="#fff" stroke-width="1" fill="none"/>
<circle cx="964.5" cy="655.5" r="2" fill="none" stroke="#fff" stroke-width="1"/><path d="M960.8 663.5 q0-4 3.7-5 q3.7 1 3.7 5" stroke="#fff" stroke-width="1" fill="none"/>
<path d="M993.5 659.5 L999 654 L1004.5 659.5" stroke="#fff" stroke-width="1.2" fill="none"/>
<path d="M1017 661 q-1 3 1.5 2.5 q3-1 10-10 q2-2.5 0.5-3.5 q-1.5-1-3.5 1.5 q-7 8-7.5 10.5 M1027 656 l3 2" stroke="#fff" stroke-width="1" fill="none"/>
<rect x="1041.2" y="650.3" width="19.8" height="11" fill="none" stroke="#fff" stroke-width="1"/>
<path d="M1043.5 653h15M1043.5 655.5h15M1043.5 658h15" stroke="#fff" stroke-width="0.8" stroke-dasharray="1,1"/>
<text x="1071" y="659.8" font-size="10.3" fill="#fff" text-anchor="start" textLength="19.5" lengthAdjust="spacingAndGlyphs" >ENG</text>
<text x="1105.8" y="652.3" font-size="10.3" fill="#fff" text-anchor="start" textLength="38" lengthAdjust="spacingAndGlyphs" >9:23 AM</text>
<text x="1102.5" y="667.2" font-size="10.3" fill="#fff" text-anchor="start" textLength="45.5" lengthAdjust="spacingAndGlyphs" >6/18/2020</text>
<path d="M1164 649.5h15.5v11h-9l-3.5 3.2v-3.2h-3z" fill="#fff"/><path d="M1166.5 652.5h10M1166.5 655h10M1166.5 657.5h7" stroke="#0a0f16" stroke-width="0.8"/>
<circle cx="1178.5" cy="662.8" r="5.5" fill="#444" stroke="#0a0f16" stroke-width="1"/>
<text x="1178.5" y="666.3" font-size="8.5" fill="#fff" text-anchor="middle" font-weight="bold">4</text>
</svg></body></html>
